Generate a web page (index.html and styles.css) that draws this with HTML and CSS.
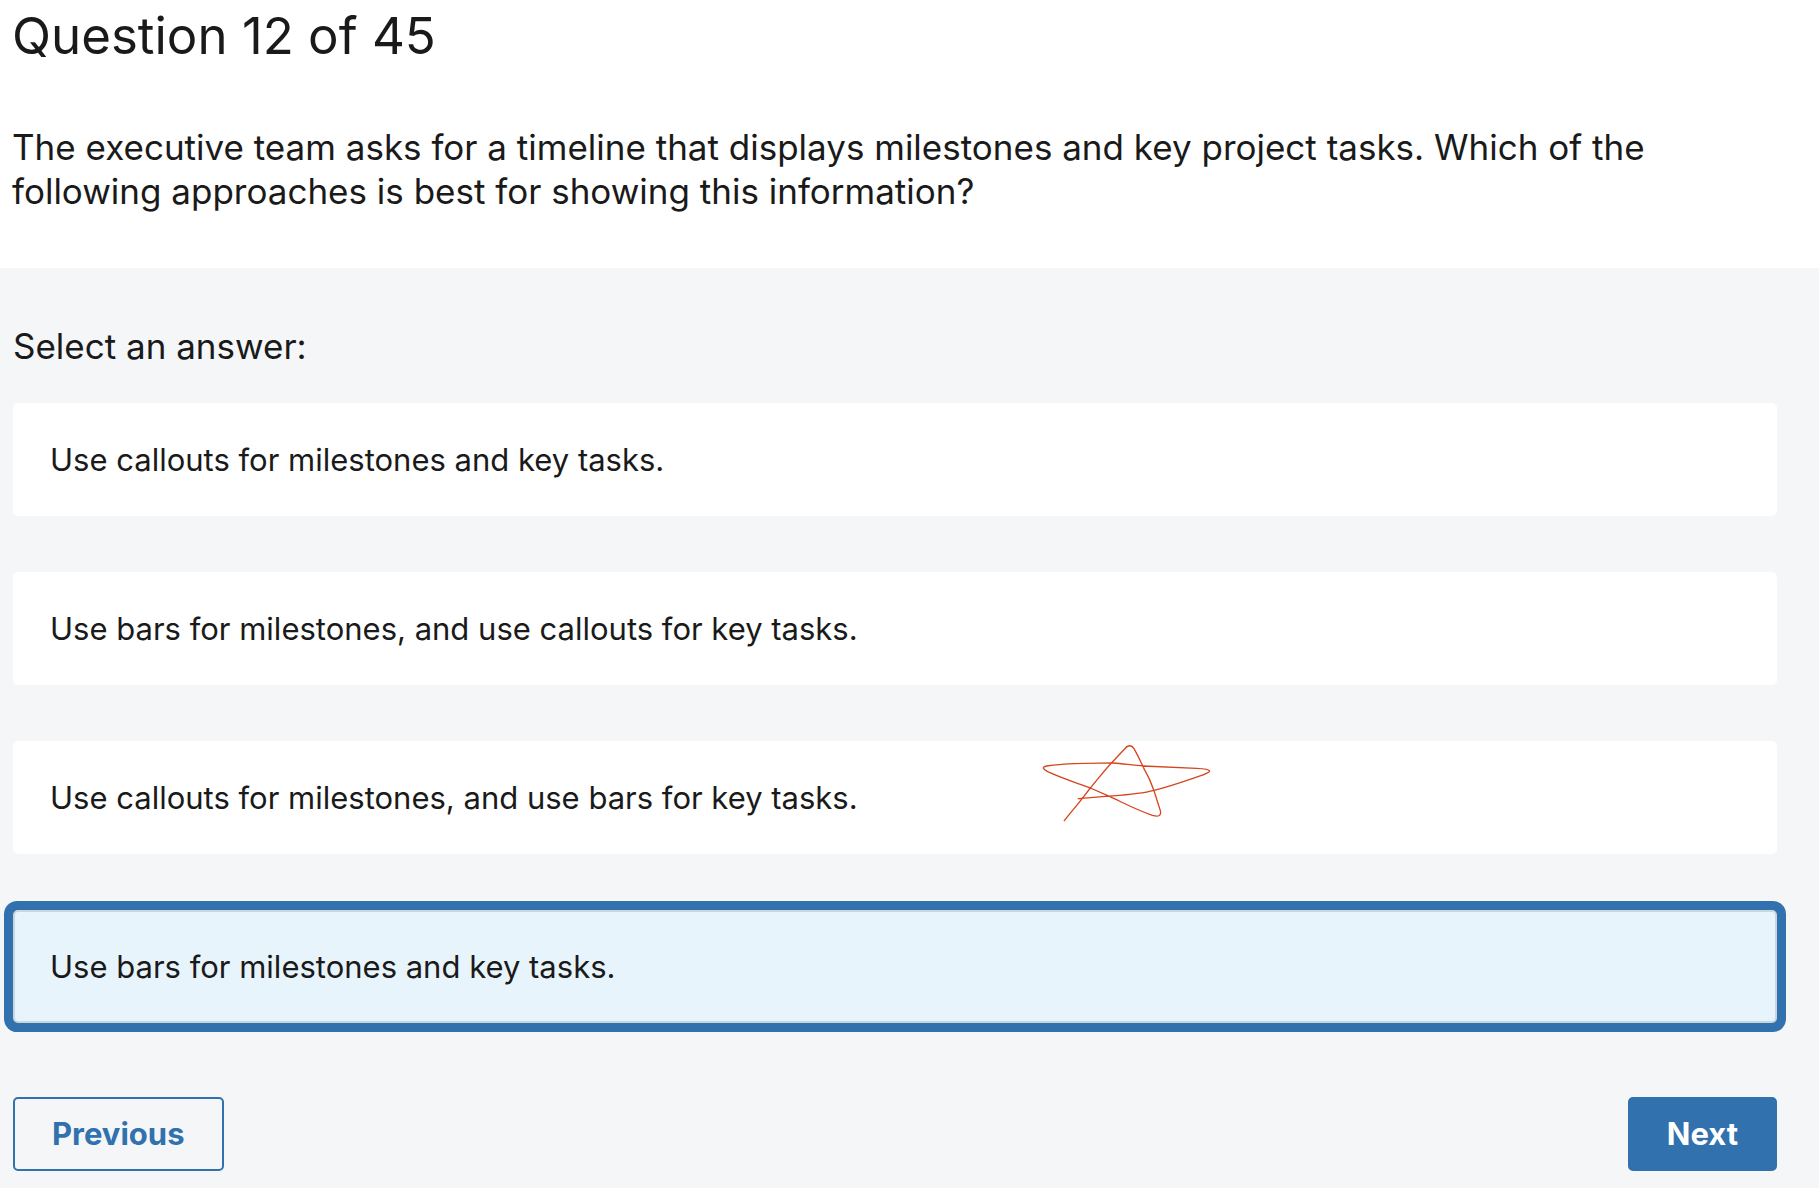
FILE: index.html
```html
<!DOCTYPE html>
<html lang="en">
<head>
  <meta charset="UTF-8">
  <meta name="viewport" content="width=device-width, initial-scale=1.0">
  <title>Question 12 of 45</title>
  <link rel="stylesheet" href="styles.css">
</head>
<body>
  <header class="question">
    <h1 class="question-count">Question 12 of 45</h1>
    <p class="question-text">The executive team asks for a timeline that displays milestones and key project tasks. Which of the following approaches is best for showing this information?</p>
  </header>

  <form class="quiz">
    <fieldset class="answers">
      <legend class="answers-title">Select an answer:</legend>

      <label class="answer">
        <input type="radio" name="answer" value="1">
        <span>Use callouts for milestones and key tasks.</span>
      </label>

      <label class="answer">
        <input type="radio" name="answer" value="2">
        <span>Use bars for milestones, and use callouts for key tasks.</span>
      </label>

      <label class="answer">
        <input type="radio" name="answer" value="3">
        <span>Use callouts for milestones, and use bars for key tasks.</span>
        <svg class="star" viewBox="48 33 540 342" aria-hidden="true">
          <path d="M133 272 C150 249 168 230 187 205 L211 174 C234 147 253 121 275 98 L313 58 C322 45 334 43 342 56 C353 75 361 92 370 112 C384 136 394 158 402 182 L421 242 C425 259 414 261 397 256 C350 240 311 219 270 200 L211 174 C165 157 121 143 83 125 C70 118 63 111 80 108 C142 98 212 100 281 99 C310 101 339 106 370 108 L530 115 C550 116 567 118 569 123 C567 130 545 136 525 143 C484 157 444 171 402 181 C357 193 310 195 257 199 L175 206"/>
        </svg>
      </label>

      <label class="answer">
        <input type="radio" name="answer" value="4" checked>
        <span>Use bars for milestones and key tasks.</span>
      </label>
    </fieldset>

    <div class="actions">
      <button type="button" class="btn btn-outline">Previous</button>
      <button type="submit" class="btn btn-primary">Next</button>
    </div>
  </form>
</body>
</html>
```

FILE: styles.css
```css
* {
  box-sizing: border-box;
}

body {
  margin: 0;
  background-color: #f4f6f8;
  color: #1a1a1a;
  font-family: Inter, "Liberation Sans", sans-serif;
}

.question {
  padding: 0 42px 55px 12px;
  background-color: #fff;
}

.question-count {
  margin: 0 0 53px;
  font-size: 51px;
  font-weight: 400;
  line-height: 72px;
}

.question-text {
  max-width: 1660px;
  margin: 0;
  font-size: 35px;
  line-height: 44px;
}

.quiz {
  padding: 56px 42px 17px 13px;
}

.answers {
  display: flex;
  flex-direction: column;
  gap: 56px;
  min-width: 0;
  margin: 0;
  padding: 0;
  border: 0;
}

.answers-title {
  margin-bottom: 35px;
  padding: 0;
  font-size: 35px;
  line-height: 44px;
}

.answer {
  position: relative;
  display: block;
  padding: 35px;
  border: 2px solid #fff;
  border-radius: 5px;
  background-color: #fff;
  font-size: 31px;
  line-height: 39px;
  cursor: pointer;
}

.answer input {
  position: absolute;
  margin: 0;
  opacity: 0;
}

.answer:has(input:checked) {
  border-color: #c9d6dc;
  background-color: #e8f4fc;
  box-shadow: 0 0 0 9px #3171ad;
}

/* hand-drawn mark over the card */
.star {
  position: absolute;
  top: -2px;
  left: 58%;
  width: 180px;
  height: 114px;
  fill: none;
  stroke: #d6451f;
  stroke-width: 4;
  stroke-linecap: round;
  stroke-linejoin: round;
}

.actions {
  display: flex;
  justify-content: space-between;
  margin-top: 74px;
}

.btn {
  padding: 15px 37px;
  border: 2px solid #3171ad;
  border-radius: 5px;
  font-family: inherit;
  font-size: 31px;
  font-weight: 700;
  line-height: 40px;
  cursor: pointer;
}

.btn-outline {
  background-color: transparent;
  color: #3171ad;
}

.btn-primary {
  background-color: #3171ad;
  color: #fff;
}
```
